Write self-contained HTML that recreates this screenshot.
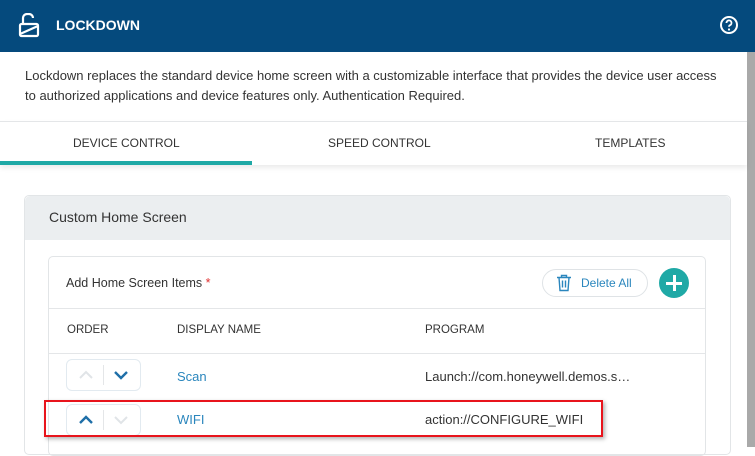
<!DOCTYPE html>
<html><head><meta charset="utf-8"><style>
*{box-sizing:border-box;margin:0;padding:0}
body{width:755px;height:447px;overflow:hidden;font-family:"Liberation Sans",sans-serif;background:#fff;position:relative;color:#333}
.abs{position:absolute;white-space:nowrap}
.hdr{left:0;top:0;width:755px;height:52px;background:#054a7d}
.sb{left:747px;top:52px;width:8px;height:395px;background:#a9a9a9}
.desc{font-size:13px;color:#333;line-height:20px}
.tabs{left:0;top:121px;width:747px;height:44px;border-top:1px solid #e4e6e8;box-shadow:0 3px 5px rgba(0,0,0,0.08);background:#fff}
.tab{font-size:12px;color:#333;top:136px}
.content{left:0;top:166px;width:747px;height:281px;background:#fff}
.card{left:24px;top:195px;width:707px;height:260px;border:1px solid #e2e5e7;border-radius:5px;background:#fff}
.cardh{left:25px;top:196px;width:705px;height:44px;background:#ebeef0;border-radius:5px 5px 0 0}
.inner{left:48px;top:256px;width:658px;height:200px;border:1px solid #e2e5e7;border-radius:5px}
.line{height:1px;background:#e4e6e8;left:49px;width:656px}
.th{font-size:11.5px;color:#333;top:324px}
.ord{width:75px;height:32px;border:1px solid #e2eaf0;border-radius:6px}
</style></head><body>
<div class="abs hdr"></div>
<svg class="abs" style="left:18px;top:13px" width="24" height="26" viewBox="0 0 24 26" fill="none" stroke="#fff" stroke-width="2.2"><path d="M5 10V5a4 4 0 0 1 4-4h2a4 4 0 0 1 4 4"/><rect x="2" y="11" width="18" height="12" rx="1.5"/><path d="M2 21L20 13"/></svg>
<div class="abs" style="left:56px;top:17px;font-size:14px;font-weight:bold;color:#fff">LOCKDOWN</div>
<svg class="abs" style="left:719px;top:15px" width="20" height="20" viewBox="0 0 20 20"><circle cx="10" cy="10" r="8" fill="none" stroke="#fff" stroke-width="2"/><path d="M7.5 8a2.5 2.5 0 1 1 3.5 2.2c-.8.4-1 .9-1 1.6" fill="none" stroke="#fff" stroke-width="1.8"/><circle cx="10" cy="14.5" r="1.1" fill="#fff"/></svg>
<div class="abs sb"></div>
<div class="abs desc" style="left:25px;top:66px">Lockdown replaces the standard device home screen with a customizable interface that provides the device user access<br>to authorized applications and device features only. Authentication Required.</div>
<div class="abs tabs"></div>
<div class="abs" style="left:0;top:161px;width:252px;height:4px;background:#1fa9a6"></div>
<div class="abs tab" style="left:73px">DEVICE CONTROL</div>
<div class="abs tab" style="left:328px">SPEED CONTROL</div>
<div class="abs tab" style="left:595px">TEMPLATES</div>
<div class="abs card"></div>
<div class="abs cardh"></div>
<div class="abs" style="left:49px;top:209px;font-size:14px;color:#333">Custom Home Screen</div>
<div class="abs inner"></div>
<div class="abs" style="left:66px;top:276px;font-size:12.5px;color:#333">Add Home Screen Items <span style="color:#e03030">*</span></div>
<div class="abs" style="left:542px;top:269px;width:106px;height:28px;border:1px solid #dfe3e6;border-radius:14px"></div>
<svg class="abs" style="left:556px;top:274px" width="16" height="18" viewBox="0 0 16 18" fill="none" stroke="#2a86bd" stroke-width="1.4"><path d="M1 3.5h14M5.5 3.5V1.5h5v2M3 3.5l1 13h8l1-13M6.5 6.5v7M9.5 6.5v7"/></svg>
<div class="abs" style="left:581px;top:276px;font-size:12px;color:#2a86bd">Delete All</div>
<div class="abs" style="left:659px;top:268px;width:30px;height:30px;border-radius:50%;background:#1fa9a6"></div>
<div class="abs" style="left:666px;top:282px;width:16px;height:3px;background:#fff"></div>
<div class="abs" style="left:672.5px;top:275px;width:3px;height:16px;background:#fff"></div>
<div class="abs line" style="top:308px"></div>
<div class="abs th" style="left:67px">ORDER</div>
<div class="abs th" style="left:177px">DISPLAY NAME</div>
<div class="abs th" style="left:425px">PROGRAM</div>
<div class="abs line" style="top:353px"></div>
<div class="abs ord" style="left:66px;top:359px"></div>
<div class="abs" style="left:103px;top:365px;width:1px;height:20px;background:#e4e6e8"></div>
<svg class="abs" style="left:78px;top:370px" width="16" height="10"><path d="M2 8l6-6 6 6" fill="none" stroke="#e0e4e7" stroke-width="2"/></svg>
<svg class="abs" style="left:113px;top:370px" width="16" height="10"><path d="M2 2l6 6 6-6" fill="none" stroke="#1f6fa8" stroke-width="2.4"/></svg>
<div class="abs" style="left:177px;top:369px;font-size:13px;color:#2a86bd">Scan</div>
<div class="abs" style="left:425px;top:369px;font-size:13px;color:#333">Launch://com.honeywell.demos.s…</div>
<div class="abs ord" style="left:66px;top:404px"></div>
<div class="abs" style="left:103px;top:410px;width:1px;height:20px;background:#e4e6e8"></div>
<svg class="abs" style="left:78px;top:415px" width="16" height="10"><path d="M2 8l6-6 6 6" fill="none" stroke="#1f6fa8" stroke-width="2.4"/></svg>
<svg class="abs" style="left:113px;top:415px" width="16" height="10"><path d="M2 2l6 6 6-6" fill="none" stroke="#e0e4e7" stroke-width="2"/></svg>
<div class="abs" style="left:177px;top:412px;font-size:13px;color:#2a86bd">WIFI</div>
<div class="abs" style="left:425px;top:412px;font-size:13px;color:#333">action://CONFIGURE_WIFI</div>
<div class="abs" style="left:44px;top:400px;width:559px;height:37px;border:2px solid #e8141c;box-shadow:2px 2px 4px rgba(0,0,0,0.3)"></div>
</body></html>
